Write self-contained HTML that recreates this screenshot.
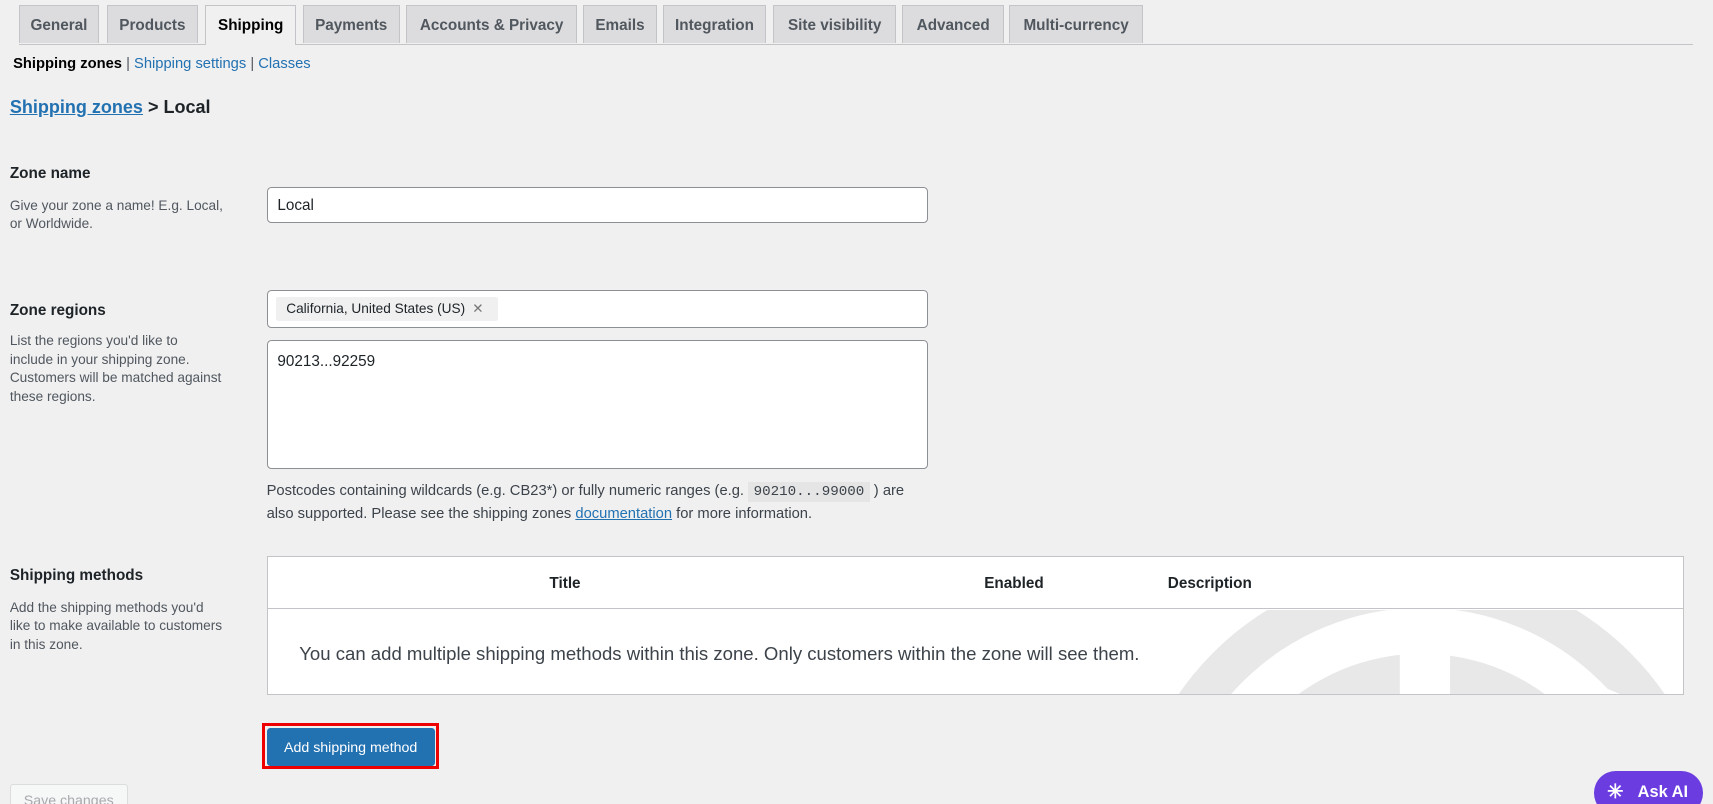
<!DOCTYPE html>
<html><head><meta charset="utf-8">
<style>
html,body{margin:0;padding:0;background:#f0f0f1;overflow:hidden;width:1713px;height:804px}
#w{zoom:1.0925;position:relative;width:1568px;height:736px;overflow:hidden;font-family:"Liberation Sans",sans-serif;color:#1d2327}
.a{position:absolute;white-space:nowrap}
.tab{position:absolute;top:5px;height:34px;background:#dcdcde;border:1px solid #c3c4c7;border-bottom:none;font-size:14px;font-weight:bold;color:#50575e;line-height:36px;text-align:center;box-sizing:border-box}
.tab.on{background:#f0f0f1;color:#000;height:36px}
.lbl{font-size:14px;font-weight:bold}
.desc{font-size:12.5px;color:#50575e;line-height:17px}
.box{position:absolute;background:#fff;border:1px solid #8c8f94;border-radius:4px;box-sizing:border-box}
a{color:#2271b1}
</style></head><body><div id="w">
<div class="a" style="left:17px;top:40px;width:1533px;height:1px;background:#c3c4c7"></div>
<div class="tab" style="left:17px;width:74px">General</div>
<div class="tab" style="left:98px;width:83px">Products</div>
<div class="tab on" style="left:188px;width:83px">Shipping</div>
<div class="tab" style="left:277px;width:89px">Payments</div>
<div class="tab" style="left:372px;width:156px">Accounts &amp; Privacy</div>
<div class="tab" style="left:534px;width:67px">Emails</div>
<div class="tab" style="left:607px;width:94px">Integration</div>
<div class="tab" style="left:708px;width:112px">Site visibility</div>
<div class="tab" style="left:826px;width:93px">Advanced</div>
<div class="tab" style="left:924px;width:122px">Multi-currency</div>

<div class="a" style="left:12px;top:51px;font-size:13.5px;color:#50575e"><b style="color:#000">Shipping zones</b> | <a style="text-decoration:none">Shipping settings</a> | <a style="text-decoration:none">Classes</a></div>
<div class="a" style="left:9px;top:89px;font-size:16.5px;font-weight:bold"><a style="text-decoration:underline">Shipping zones</a> &gt; Local</div>

<div class="a lbl" style="left:9px;top:151px">Zone name</div>
<div class="a desc" style="left:9px;top:180px">Give your zone a name! E.g. Local,<br>or Worldwide.</div>
<div class="box" style="left:244px;top:171px;width:605px;height:33px;font-size:14px;padding:8px 9px">Local</div>

<div class="a lbl" style="left:9px;top:276px">Zone regions</div>
<div class="a desc" style="left:9px;top:304px">List the regions you'd like to<br>include in your shipping zone.<br>Customers will be matched against<br>these regions.</div>
<div class="box" style="left:244px;top:265px;width:605px;height:35px"></div>
<div class="a" style="left:253px;top:272px;width:203px;height:22px;background:#f0f0f1;border-radius:2px;font-size:12.5px;line-height:22px;padding-left:9px;box-sizing:border-box">California, United States (US) <span style="color:#777;margin-left:3px">✕</span></div>
<div class="box" style="left:244px;top:311px;width:605px;height:118px;font-size:14px;padding:11px 9px">90213...92259</div>
<div class="a" style="left:244px;top:440px;font-size:13.5px;color:#3c434a;line-height:20px">Postcodes containing wildcards (e.g. CB23*) or fully numeric ranges (e.g. <code style="background:#e5e5e5;padding:2px 5px;font-family:'Liberation Mono',monospace;font-size:13px">90210...99000</code> ) are<br>also supported. Please see the shipping zones <a style="text-decoration:underline">documentation</a> for more information.</div>

<div class="a lbl" style="left:9px;top:519px">Shipping methods</div>
<div class="a desc" style="left:9px;top:548px">Add the shipping methods you'd<br>like to make available to customers<br>in this zone.</div>
<div class="a" style="left:244px;top:509px;width:1297px;height:127px;background:#fff;border:1px solid #c3c4c7;box-sizing:border-box;overflow:hidden">
 <svg style="position:absolute;left:0;top:48px" width="1297" height="79">
  <g transform="translate(1056,230)">
   <circle r="270" fill="#e8e8e8"/><circle r="232" fill="#fff"/><circle r="190" fill="#e8e8e8"/>
   <rect x="-20" y="-200" width="46" height="75" fill="#fff"/>
   <path d="M70 -200 L260 -120 L240 -60 L120 -150Z" fill="#fff"/>
  </g>
 </svg>
 <div class="a" style="left:0;top:0;width:1297px;height:47px;border-bottom:1px solid #c3c4c7;background:#fff;font-size:14px;font-weight:bold">
  <span class="a" style="left:258px;top:16px">Title</span>
  <span class="a" style="left:656px;top:16px">Enabled</span>
  <span class="a" style="left:824px;top:16px">Description</span>
 </div>
 <div class="a" style="left:29px;top:79px;font-size:17px;color:#3c434a">You can add multiple shipping methods within this zone. Only customers within the zone will see them.</div>
</div>

<div class="a" style="left:240px;top:662px;width:162px;height:42px;border:3px solid #e00;box-sizing:border-box"></div>
<div class="a" style="left:244px;top:666px;width:154px;height:35px;background:#2271b1;border-radius:3px;color:#fff;font-size:13px;line-height:37px;text-align:center">Add shipping method</div>
<div class="a" style="left:9px;top:718px;width:106px;height:30px;border:1px solid #dcdcde;border-radius:3px;color:#a7aaad;font-size:13px;line-height:30px;text-align:center;background:#f6f7f7">Save changes</div>
<div class="a" style="left:1459px;top:706px;width:100px;height:40px;background:#6b3de0;border-radius:20px;color:#fff;font-weight:bold;font-size:15px;line-height:40px"><span style="position:absolute;left:12px;font-size:18px">✳</span><span style="position:absolute;left:40px">Ask AI</span></div>
</div></body></html>
